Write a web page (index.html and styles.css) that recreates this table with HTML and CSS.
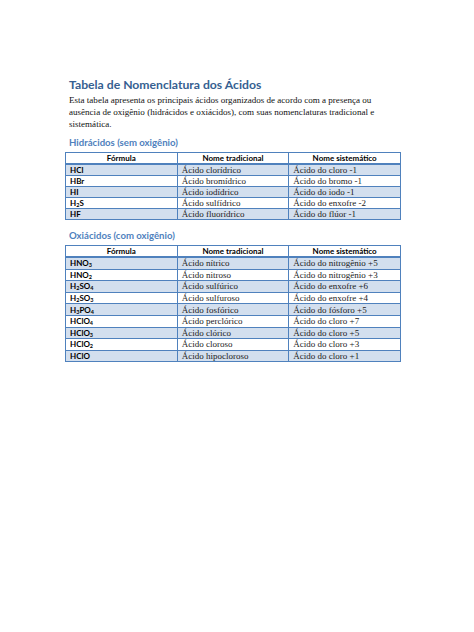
FILE: index.html
```html
<!DOCTYPE html>
<html lang="pt">
<head>
<meta charset="utf-8">
<title>Tabela de Nomenclatura dos Ácidos</title>
<link rel="stylesheet" href="styles.css">
</head>
<body>
<main class="page">
  <h1 class="title">Tabela de Nomenclatura dos Ácidos</h1>
  <p class="intro">Esta tabela apresenta os principais ácidos organizados de acordo com a presença ou ausência de oxigênio (hidrácidos e oxiácidos), com suas nomenclaturas tradicional e sistemática.</p>

  <h2 class="section">Hidrácidos (sem oxigênio)</h2>
  <table class="acids">
    <thead>
      <tr><th>Fórmula</th><th>Nome tradicional</th><th>Nome sistemático</th></tr>
    </thead>
    <tbody>
      <tr><td class="f">HCl</td><td>Ácido clorídrico</td><td>Ácido do cloro -1</td></tr>
      <tr><td class="f">HBr</td><td>Ácido bromídrico</td><td>Ácido do bromo -1</td></tr>
      <tr><td class="f">HI</td><td>Ácido iodídrico</td><td>Ácido do iodo -1</td></tr>
      <tr><td class="f">H<sub>2</sub>S</td><td>Ácido sulfídrico</td><td>Ácido do enxofre -2</td></tr>
      <tr><td class="f">HF</td><td>Ácido fluorídrico</td><td>Ácido do flúor -1</td></tr>
    </tbody>
  </table>

  <h2 class="section section-second">Oxiácidos (com oxigênio)</h2>
  <table class="acids acids-tall">
    <thead>
      <tr><th>Fórmula</th><th>Nome tradicional</th><th>Nome sistemático</th></tr>
    </thead>
    <tbody>
      <tr><td class="f">HNO<sub>3</sub></td><td>Ácido nítrico</td><td>Ácido do nitrogênio +5</td></tr>
      <tr><td class="f">HNO<sub>2</sub></td><td>Ácido nitroso</td><td>Ácido do nitrogênio +3</td></tr>
      <tr><td class="f">H<sub>2</sub>SO<sub>4</sub></td><td>Ácido sulfúrico</td><td>Ácido do enxofre +6</td></tr>
      <tr><td class="f">H<sub>2</sub>SO<sub>3</sub></td><td>Ácido sulfuroso</td><td>Ácido do enxofre +4</td></tr>
      <tr><td class="f">H<sub>3</sub>PO<sub>4</sub></td><td>Ácido fosfórico</td><td>Ácido do fósforo +5</td></tr>
      <tr><td class="f">HClO<sub>4</sub></td><td>Ácido perclórico</td><td>Ácido do cloro +7</td></tr>
      <tr><td class="f">HClO<sub>3</sub></td><td>Ácido clórico</td><td>Ácido do cloro +5</td></tr>
      <tr><td class="f">HClO<sub>2</sub></td><td>Ácido cloroso</td><td>Ácido do cloro +3</td></tr>
      <tr><td class="f">HClO</td><td>Ácido hipocloroso</td><td>Ácido do cloro +1</td></tr>
    </tbody>
  </table>
</main>
</body>
</html>
```

FILE: styles.css
```css
html, body {
  margin: 0;
  padding: 0;
  background: #ffffff;
}

.page {
  width: 336px;
  padding: 78px 0 0 65px;
  color: #000;
}

.title {
  margin: 0;
  padding-left: 4px;
  font-family: "Lato", "Liberation Sans", sans-serif;
  font-weight: 700;
  font-size: 12.2px;
  line-height: 14px;
  color: #365f91;
}

.intro {
  margin: 2px 0 0;
  padding-left: 4px;
  width: 318px;
  font-family: "Liberation Serif", serif;
  font-size: 9.05px;
  line-height: 12px;
  color: #111;
}

.section {
  margin: 7px 0 3px;
  padding-left: 4px;
  font-family: "Lato", "Liberation Sans", sans-serif;
  font-weight: 700;
  font-size: 9.6px;
  line-height: 12px;
  color: #4f81bd;
}

.section-second {
  margin: 10px 0 3px;
}

.acids {
  width: 336px;
  border-collapse: collapse;
  table-layout: fixed;
  border: 1px solid #4f81bd;
}

.acids th,
.acids td {
  border: 1px solid #4f81bd;
  height: 10px;
  padding: 0 0 0 4px;
  line-height: 10px;
  white-space: nowrap;
  overflow: hidden;
}

.acids th {
  font-family: "Lato", "Liberation Sans", sans-serif;
  font-weight: 700;
  font-size: 8px;
  text-align: center;
  padding: 0;
  height: 10px;
  border-bottom: 2px solid #4f81bd;
}

.acids td {
  font-family: "Liberation Serif", serif;
  font-size: 9px;
  color: #1a1a1a;
}

.acids td.f {
  font-family: "Lato", "Liberation Sans", sans-serif;
  font-weight: 700;
  font-size: 8px;
  color: #000;
}

.acids-tall td {
  height: 10.6px;
}

.acids tbody tr:nth-child(odd) td {
  background: #d3dfee;
}

.acids sub {
  font-size: 5.5px;
  line-height: 0;
  vertical-align: -1px;
}
```
